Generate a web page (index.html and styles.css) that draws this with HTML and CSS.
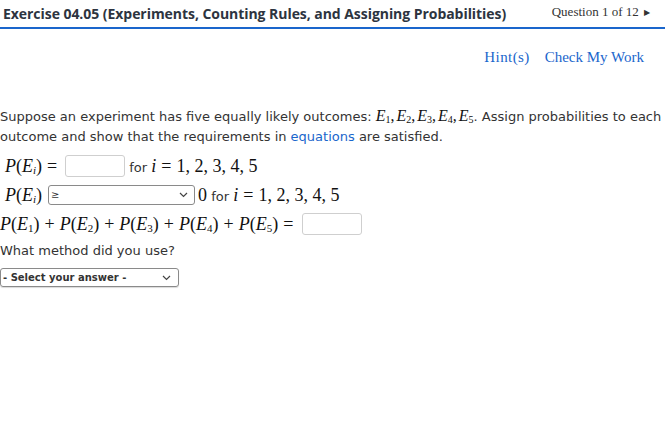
FILE: index.html
```html
<!DOCTYPE html>
<html>
<head>
<meta charset="utf-8">
<link rel="stylesheet" href="styles.css">
</head>
<body>
<header class="top">
  <h1 class="title">Exercise 04.05 (Experiments, Counting Rules, and Assigning Probabilities)</h1>
  <div class="qnav">Question 1 of 12 <span class="tri">&#9654;</span></div>
</header>
<div class="tools">
  <a class="tool">Hint(s)</a>
  <a class="tool">Check My Work</a>
</div>
<div class="content">
  <p class="para">Suppose an experiment has five equally likely outcomes: <span class="m pm"><i>E</i><sub>1</sub>,<i class="sp">E</i><sub>2</sub>,<i class="sp">E</i><sub>3</sub>,<i class="sp">E</i><sub>4</sub>,<i class="sp">E</i><sub>5</sub></span>. Assign probabilities to each outcome and show that the requirements in <a class="link">equations</a> are satisfied.</p>
  <div class="row r1">
    <span class="m"><i>P</i>(<i>E</i><sub><i>i</i></sub>)<span class="op">=</span></span>
    <span class="inp"></span>
    <span class="txt">for <span class="m"><i>i</i><span class="op">=</span>1, 2, 3, 4, 5</span></span>
  </div>
  <div class="row r2">
    <span class="m"><i>P</i>(<i>E</i><sub><i>i</i></sub>)</span>
    <span class="sel"><span class="selv">&#8805;</span><svg class="chev" width="9" height="6" viewBox="0 0 9 6"><path d="M1 1l3.5 3.5L8 1" fill="none" stroke="#444" stroke-width="1.2"/></svg></span>
    <span class="txt"><span class="m">0</span> for <span class="m"><i>i</i><span class="op">=</span>1, 2, 3, 4, 5</span></span>
  </div>
  <div class="row r3">
    <span class="m"><i>P</i>(<i>E</i><sub>1</sub>)<span class="op">+</span><i>P</i>(<i>E</i><sub>2</sub>)<span class="op">+</span><i>P</i>(<i>E</i><sub>3</sub>)<span class="op">+</span><i>P</i>(<i>E</i><sub>4</sub>)<span class="op">+</span><i>P</i>(<i>E</i><sub>5</sub>)<span class="op">=</span></span>
    <span class="inp"></span>
  </div>
  <p class="q">What method did you use?</p>
  <div class="ans"><span>- Select your answer -</span><svg class="chev" width="9" height="6" viewBox="0 0 9 6"><path d="M1 1l3.5 3.5L8 1" fill="none" stroke="#444" stroke-width="1.2"/></svg></div>
</div>
</body>
</html>
```

FILE: styles.css
```css
html, body { margin: 0; padding: 0; background: #fff; }
body { width: 665px; height: 435px; overflow: hidden; }
.top {
  display: flex; justify-content: space-between; align-items: flex-end;
  height: 27px; border-bottom: 2px solid #1a66cc;
  padding: 0 15px 0 3px;
}
.title {
  margin: 0 0 4px 0; font-family: "Open Sans", sans-serif; font-weight: 700;
  font-size: 14px; color: #2d3440; letter-spacing: -0.05px;
}
.qnav {
  font-family: "Liberation Serif", serif; font-size: 13px; color: #333;
  margin-bottom: 7px;
}
.tri { font-size: 8px; margin-left: 2px; vertical-align: 1px; }
.tools {
  display: flex; justify-content: flex-end; gap: 15px; padding: 20px 21px 0 0;
}
.tool {
  font-family: "Liberation Serif", serif; font-size: 15px; color: #1a66cc;
}
.tool:first-child { letter-spacing: 0.4px; }
.content {
  padding-top: 41px;
  font-family: "DejaVu Sans", sans-serif; font-size: 13px; color: #333;
}
.para { margin: 0; line-height: 20px; }
.link { color: #1a66cc; }
.m { font-family: "Liberation Serif", serif; font-size: 18px; color: #111; line-height: 1; }
.m sub { font-size: 11px; line-height: 0; vertical-align: -0.18em; }
.pm { font-size: 16px; }
.pm sub { font-size: 10px; }
.m .sp { margin-left: 2px; }
.op { margin: 0 5px; font-style: normal; }
.row { display: flex; align-items: center; gap: 3px; height: 29px; }
.r1 { padding-left: 5px; margin-top: 4px; }
.r1 .inp { margin-right: 1px; }
.r2 { padding-left: 5px; }
.r2 .sel { margin-left: 3px; }
.r3 { padding-left: 0; }
.r3 .inp { margin-left: 1px; }
.inp {
  display: inline-block; width: 58px; height: 20px; border: 1px solid #cfcfcf; border-radius: 3px; background: #fff;
}
.sel {
  display: inline-flex; align-items: center; justify-content: space-between;
  width: 137px; height: 18px; border: 1px solid #8a8a8a; border-radius: 3px; padding: 0 6px 0 2px;
}
.selv { font-family: "DejaVu Sans", sans-serif; font-size: 10px; }
.q { margin: 3px 0 0 0; line-height: 20px; font-size: 13px; }
.ans {
  margin-top: 7px; display: flex; align-items: center; justify-content: space-between;
  width: 168px; height: 17px; border: 1px solid #8a8a8a; border-radius: 3px; padding: 0 7px 0 2px;
  font-family: "DejaVu Sans", sans-serif; font-weight: 700; font-size: 10px; color: #333;
  box-shadow: 0 1px 1px rgba(0,0,0,0.15);
}
```
